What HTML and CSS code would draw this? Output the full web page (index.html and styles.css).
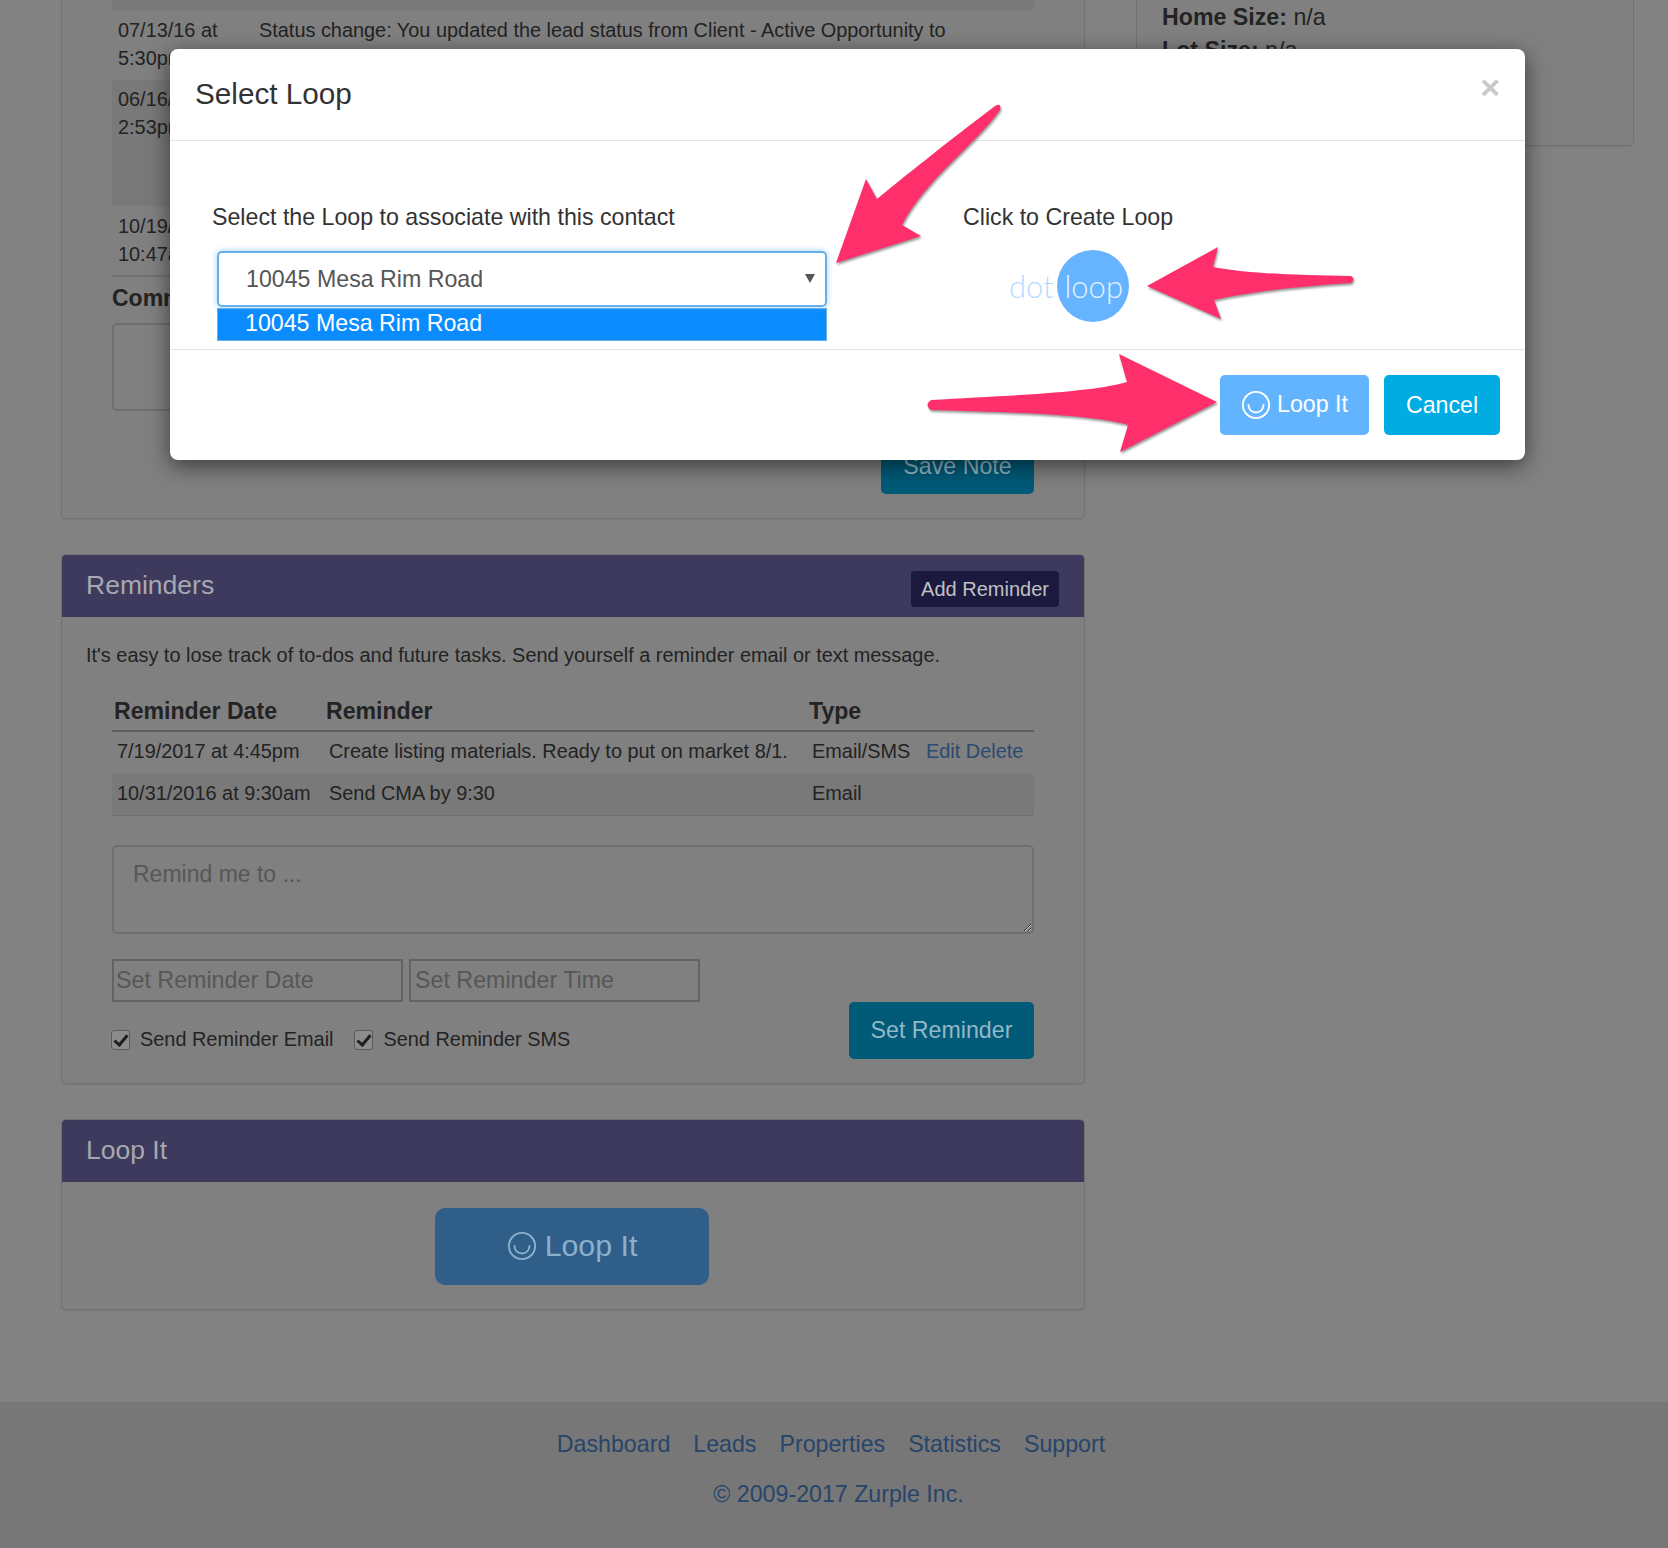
FILE: index.html
```html
<!DOCTYPE html>
<html lang="en">
<head>
    <meta charset="UTF-8">
    <meta name="viewport" content="width=device-width, initial-scale=1.0">
    <title>Select Loop</title>
    <link rel="stylesheet" href="styles.css">
</head>
<body>

<div class="page">
    <div class="columns">
        <main class="main-col">
            <section class="panel panel-notes">
                <table class="notes">
                    <tr class="band"><td colspan="2"></td></tr>
                    <tr class="note-row">
                        <td class="note-date">07/13/16 at<br>5:30pm</td>
                        <td>Status change: You updated the lead status from Client - Active Opportunity to</td>
                    </tr>
                    <tr class="note-row note-tall">
                        <td class="note-date">06/16/16 at<br>2:53pm</td>
                        <td></td>
                    </tr>
                    <tr class="note-row note-last">
                        <td class="note-date">10/19/15 at<br>10:47am</td>
                        <td></td>
                    </tr>
                </table>
                <h4 class="comments-title">Comments</h4>
                <textarea class="note-input"></textarea>
                <div class="btn-row">
                    <button class="btn btn-teal btn-save">Save Note</button>
                </div>
            </section>

            <section class="panel panel-reminders">
                <div class="panel-head">
                    <h3>Reminders</h3>
                    <button class="btn-add">Add Reminder</button>
                </div>
                <div class="panel-body">
                    <p class="intro">It's easy to lose track of to-dos and future tasks. Send yourself a reminder email or text message.</p>
                    <table class="reminders">
                        <colgroup>
                            <col class="col-date">
                            <col class="col-text">
                            <col class="col-type">
                            <col>
                        </colgroup>
                        <thead>
                            <tr>
                                <th>Reminder Date</th>
                                <th>Reminder</th>
                                <th colspan="2">Type</th>
                            </tr>
                        </thead>
                        <tbody>
                            <tr>
                                <td>7/19/2017 at 4:45pm</td>
                                <td>Create listing materials. Ready to put on market 8/1.</td>
                                <td>Email/SMS</td>
                                <td><a href="#">Edit</a> <a href="#">Delete</a></td>
                            </tr>
                            <tr class="alt">
                                <td>10/31/2016 at 9:30am</td>
                                <td>Send CMA by 9:30</td>
                                <td>Email</td>
                                <td></td>
                            </tr>
                        </tbody>
                    </table>
                    <textarea class="remind-input" placeholder="Remind me to ..."></textarea>
                    <div class="remind-form">
                        <div class="remind-left">
                            <div class="date-inputs">
                                <input type="text" placeholder="Set Reminder Date">
                                <input type="text" placeholder="Set Reminder Time">
                            </div>
                            <div class="checks">
                                <label><input type="checkbox" checked>Send Reminder Email</label>
                                <label><input type="checkbox" checked>Send Reminder SMS</label>
                            </div>
                        </div>
                        <button class="btn btn-teal btn-set">Set Reminder</button>
                    </div>
                </div>
            </section>

            <section class="panel panel-loop">
                <div class="panel-head">
                    <h3>Loop It</h3>
                </div>
                <div class="panel-body loop-body">
                    <button class="btn btn-loop-big">
                        <svg class="smile" viewBox="0 0 32 32"><circle cx="16" cy="16" r="14"/><path d="M8 16a8 8 0 0 0 16 0"/></svg>
                        Loop It
                    </button>
                </div>
            </section>
        </main>

        <aside class="side-col">
            <div class="panel panel-facts">
                <p><b>Home Size:</b> n/a</p>
                <p><b>Lot Size:</b> n/a</p>
            </div>
        </aside>
    </div>

    <footer class="footer">
        <nav class="footer-links">
            <a href="#">Dashboard</a>
            <a href="#">Leads</a>
            <a href="#">Properties</a>
            <a href="#">Statistics</a>
            <a href="#">Support</a>
        </nav>
        <p class="copyright">© 2009-2017 Zurple Inc.</p>
    </footer>
</div>

<div class="modal">
    <div class="modal-head">
        <h2>Select Loop</h2>
        <span class="modal-close">×</span>
    </div>
    <div class="modal-body">
        <div class="loop-select">
            <label>Select the Loop to associate with this contact</label>
            <div class="select">10045 Mesa Rim Road<span class="select-caret"></span></div>
            <div class="select-option">10045 Mesa Rim Road</div>
        </div>
        <div class="loop-create">
            <label>Click to Create Loop</label>
            <div class="dotloop">
                <span class="dotloop-dot">dot</span>
                <span class="dotloop-circle">loop</span>
            </div>
        </div>
    </div>
    <div class="modal-foot">
        <button class="btn btn-loop">
            <svg class="smile" viewBox="0 0 32 32"><circle cx="16" cy="16" r="14"/><path d="M8 16a8 8 0 0 0 16 0"/></svg>
            <span class="btn-loop-text">Loop It</span>
        </button>
        <button class="btn btn-cancel">Cancel</button>
    </div>
</div>

<!-- annotation arrows drawn over the screenshot -->
<svg class="arrows" viewBox="0 0 1668 1548">
    <path d="M836 263L866 179L877 199C900 180 950 140 995 106Q1002 102 1000 110C975 145 925 180 902 225L921 236Z"/>
    <path d="M1147 286L1218 247L1213 267C1250 274 1300 275 1351 276Q1356 279 1351 283C1300 286 1250 292 1214 300L1221 319Z"/>
    <path d="M1217 402L1119 354L1127 382C1090 393 1000 396 931 400Q924 405 931 410C1000 412 1090 414 1128 425L1120 452Z"/>
</svg>

</body>
</html>
```

FILE: styles.css
```css
html, body {
    margin: 0;
    padding: 0;
    height: 1548px;
    overflow: hidden;
}
body {
    position: relative;
    font-family: "Liberation Sans", Arial, sans-serif;
    font-size: 19.9px;
    color: #232323;
    background: #828282;
}
button {
    font-family: inherit;
    cursor: pointer;
}
p, h2, h3, h4 {
    margin: 0;
}
a {
    color: #2a4a70;
    text-decoration: none;
}

/* page under the modal, colours already dimmed */
.columns {
    display: flex;
    gap: 51px;
    align-items: flex-start;
    padding-left: 61px;
    height: 1402px;
}
.main-col {
    width: 1024px;
    flex: none;
}
.side-col {
    width: 498px;
    flex: none;
}
.panel {
    background: #808080;
    border: 1px solid #727272;
    border-radius: 5px;
    box-shadow: 0 1px 1px rgba(0,0,0,0.08);
    box-sizing: border-box;
}
.panel-notes {
    height: 519px;
    border-top: none;
    border-radius: 0 0 5px 5px;
    padding: 0 50px;
}
.notes {
    width: 100%;
    border-collapse: collapse;
    line-height: 28px;
}
.notes td {
    padding: 6px 6px 0;
    vertical-align: top;
}
.band td {
    height: 10px;
    padding: 0;
    background: #797979;
}
.note-row {
    height: 70px;
}
.note-date {
    width: 129px;
}
.notes .note-tall td {
    height: 121px;
    padding-top: 5px;
    background: #797979;
}
.note-last td {
    border-bottom: 2px solid #727272;
}
.comments-title {
    font-size: 23px;
    line-height: 30px;
    margin: 6px 0 10px;
}
.note-input {
    display: block;
    width: 100%;
    height: 88px;
    box-sizing: border-box;
    background: #808080;
    border: 2px solid #6e6e6e;
    border-radius: 5px;
}
.btn-row {
    display: flex;
    justify-content: flex-end;
    margin-top: 27px;
}
.btn {
    border: none;
    border-radius: 5px;
    font-size: 23.2px;
    color: #fff;
}
.btn-teal {
    background: #005a78;
    color: #93b8c6;
}
.btn-save {
    width: 153px;
    height: 56px;
}
.panel-reminders {
    height: 530px;
    margin-top: 35px;
}
.panel-head {
    display: flex;
    justify-content: space-between;
    align-items: center;
    height: 62px;
    padding: 0 25px 2px 24px;
    box-sizing: border-box;
    background: #3d3a5e;
    border-radius: 4px 4px 0 0;
}
.panel-head h3 {
    font-size: 26.5px;
    font-weight: normal;
    color: #a8a8b0;
}
.btn-add {
    width: 148px;
    height: 36px;
    margin-top: 8px;
    padding: 0;
    background: #1b1a3e;
    border: none;
    border-radius: 4px;
    font-size: 20px;
    color: #c0c0c4;
}
.panel-body {
    padding: 24px 50px 0;
}
.intro {
    margin-left: -26px;
    line-height: 28px;
}
.reminders {
    width: 100%;
    margin-top: 28px;
    border-collapse: collapse;
    table-layout: fixed;
    line-height: 28px;
}
.col-date { width: 212px; }
.col-text { width: 483px; }
.col-type { width: 114px; }
.reminders th {
    text-align: left;
    font-size: 23.1px;
    padding: 0 2px 5px;
    border-bottom: 2px solid #5f5f5f;
}
.reminders td {
    padding: 5px 4px 9px 5px;
    white-space: nowrap;
    height: 28px;
}
.reminders .alt td {
    padding-bottom: 8px;
    background: #797979;
    border-bottom: 1px solid #6e6e6e;
}
.remind-input {
    display: block;
    width: 100%;
    height: 89px;
    margin-top: 29px;
    padding: 14px 19px;
    box-sizing: border-box;
    background: #808080;
    border: 2px solid #6e6e6e;
    border-radius: 5px;
    font-family: inherit;
    font-size: 23px;
}
.remind-input::placeholder,
.date-inputs input::placeholder {
    color: #575757;
    opacity: 1;
}
.remind-form {
    display: flex;
    justify-content: space-between;
    align-items: flex-end;
    margin-top: 25px;
}
.date-inputs {
    display: flex;
    gap: 6px;
}
.date-inputs input {
    width: 291px;
    height: 43px;
    padding: 0 2px;
    box-sizing: border-box;
    background: #808080;
    border: 2px solid #636363;
    font-family: inherit;
    font-size: 23.25px;
}
.date-inputs input + input {
    padding-left: 4px;
}
.checks {
    display: flex;
    gap: 21px;
    margin-top: 26px;
    margin-bottom: 8px;
    margin-left: -1px;
}
.checks label {
    display: flex;
    align-items: center;
    gap: 10px;
}
.checks input {
    appearance: none;
    position: relative;
    box-sizing: border-box;
    width: 19px;
    height: 20px;
    margin: 0;
    background: #8c8c8c;
    border: 1px solid #5c5c5c;
    border-radius: 3px;
}
.checks input::after {
    content: "";
    position: absolute;
    left: 5px;
    top: 1px;
    width: 5px;
    height: 11px;
    border: solid #1f1f1f;
    border-width: 0 3px 3px 0;
    transform: rotate(40deg);
}
.btn-set {
    width: 185px;
    height: 57px;
}
.panel-loop {
    height: 191px;
    margin-top: 35px;
}
.loop-body {
    display: flex;
    justify-content: center;
    padding: 26px 2px 0 0;
}
.btn-loop-big {
    display: flex;
    align-items: center;
    justify-content: center;
    gap: 8px;
    width: 274px;
    height: 77px;
    padding-bottom: 2px;
    border-radius: 10px;
    background: #2f5f88;
    color: #8cafce;
    font-size: 30.3px;
}
.btn-loop-big .smile {
    width: 30px;
    height: 30px;
}
.panel-facts {
    height: 146px;
    padding: 1px 25px;
    border-top: none;
    border-radius: 0 0 5px 5px;
    line-height: 33px;
    font-size: 23.2px;
}
.footer {
    height: 146px;
    box-sizing: border-box;
    padding-top: 27px;
    background: #777777;
    text-align: center;
    font-size: 23.2px;
    color: #27456a;
}
.footer a {
    color: #27456a;
}
.footer-links {
    display: flex;
    justify-content: center;
    gap: 23px;
    padding-right: 6px;
    line-height: 30px;
}
.copyright {
    margin-top: 20px;
    padding-left: 9px;
    line-height: 30px;
}

/* modal */
.modal {
    position: absolute;
    top: 49px;
    left: 170px;
    width: 1355px;
    height: 411px;
    background: #fff;
    border-radius: 8px;
    box-shadow: 0 6px 22px rgba(0,0,0,0.55);
    color: #333;
    display: flex;
    flex-direction: column;
}
.modal-head {
    display: flex;
    justify-content: space-between;
    align-items: center;
    height: 89px;
    padding: 0 25px 2px;
    border-bottom: 1px solid #e5e5e5;
    flex: none;
}
.modal-head h2 {
    font-size: 29.7px;
    font-weight: normal;
}
.modal-close {
    font-size: 34px;
    font-weight: bold;
    color: #c9c9c9;
    margin-top: -12px;
}
.modal-body {
    display: flex;
    height: 208px;
    padding: 0 0 0 42px;
    flex: none;
    border-bottom: 1px solid #e5e5e5;
}
.modal-body label {
    display: block;
    margin-top: 62px;
    line-height: 28px;
    font-size: 23.2px;
}
.loop-select {
    width: 751px;
}
.select {
    position: relative;
    box-sizing: border-box;
    width: 610px;
    height: 56px;
    margin: 20px 0 0 5px;
    padding-left: 27px;
    line-height: 52px;
    font-size: 23.2px;
    color: #555;
    background: #fff;
    border: 2px solid #66afe9;
    border-radius: 5px;
    box-shadow: 0 0 6px rgba(102,175,233,0.6);
}
.select-caret {
    position: absolute;
    right: 10px;
    top: 21px;
    border-left: 5px solid transparent;
    border-right: 5px solid transparent;
    border-top: 9px solid #555;
}
.select-option {
    box-sizing: border-box;
    width: 610px;
    height: 33px;
    margin: 1px 0 0 5px;
    padding-left: 27px;
    line-height: 28px;
    font-size: 23.2px;
    color: #fff;
    background: #0a8cff;
    border: 1px solid #66afe9;
}
.dotloop {
    display: flex;
    align-items: center;
    margin: 19px 0 0 46px;
    font-family: Lato, "Open Sans", sans-serif;
    font-weight: 300;
    font-size: 31px;
}
.dotloop-dot {
    color: #b5dbff;
    margin-right: 3px;
}
.dotloop-circle {
    display: flex;
    align-items: center;
    justify-content: center;
    width: 72px;
    height: 72px;
    padding-left: 2px;
    box-sizing: border-box;
    border-radius: 50%;
    background: #66b3ff;
    color: #e3f1ff;
}
.modal-foot {
    display: flex;
    justify-content: flex-end;
    align-items: flex-start;
    gap: 15px;
    padding: 25px 25px 0 0;
}
.modal-foot .btn {
    height: 60px;
}
.btn-loop {
    display: flex;
    align-items: center;
    justify-content: center;
    gap: 6px;
    width: 149px;
    background: #62b4ff;
}
.btn-loop-text {
    margin-top: -2px;
}
.btn-loop .smile {
    width: 30px;
    height: 30px;
}
.btn-cancel {
    width: 116px;
    background: #00ace2;
}
.smile {
    fill: none;
    stroke: currentColor;
    stroke-width: 2;
    stroke-linecap: round;
}
.arrows {
    position: absolute;
    top: 0;
    left: 0;
    width: 1668px;
    height: 1548px;
    pointer-events: none;
    fill: #ff2f6b;
    filter: drop-shadow(1px 2px 1px rgba(0,0,0,0.4));
}
```
